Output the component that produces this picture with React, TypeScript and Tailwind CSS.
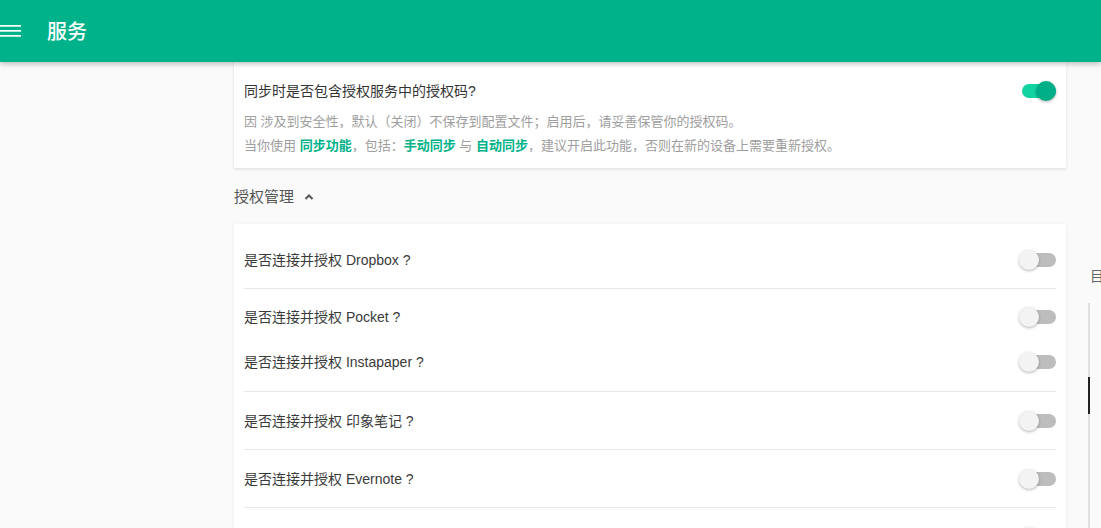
import React from "react";

const FONT = {
  fontFamily: '"Liberation Sans", "Noto Sans CJK SC", sans-serif',
};

const Switch = ({ on }: { on?: boolean }) => (
  <div
    className={`relative h-[14px] w-[34px] shrink-0 rounded-full ${
      on ? "bg-[#14d3a2]" : "bg-[#bdbdbd]"
    }`}
  >
    <div
      className={`absolute top-[-3px] h-[20px] w-[20px] rounded-full shadow-[0_1px_3px_rgba(0,0,0,0.3)] ${
        on ? "left-[14px] bg-[#00af88]" : "left-[-3px] bg-[#f3f3f3]"
      }`}
    />
  </div>
);

const services = [
  { name: "Dropbox", cls: "h-[58px] border-b border-[#e8e8e8]" },
  { name: "Pocket", cls: "pt-[19px]" },
  { name: "Instapaper", cls: "pt-[27px] pb-[20px] border-b border-[#e8e8e8]" },
  { name: "印象笔记", cls: "h-[58px] border-b border-[#e8e8e8]" },
  { name: "Evernote", cls: "h-[58px] border-b border-[#e8e8e8]" },
];

export default function App() {
  return (
    <div
      className="relative h-[528px] w-full overflow-hidden bg-[#fafafa]"
      style={FONT}
    >
      <header className="relative z-10 flex h-[62px] items-center bg-[#00b28a] shadow-[0_2px_5px_rgba(0,0,0,0.25)]">
        <svg width="22" height="14" viewBox="0 0 22 14">
          <rect x="0" y="1" width="21" height="1.7" fill="#fff" />
          <rect x="0" y="6" width="21" height="1.7" fill="#fff" />
          <rect x="0" y="11" width="21" height="1.7" fill="#fff" />
        </svg>
        <h1 className="ml-[25px] mt-[2px] text-[20px] font-medium leading-none text-white">
          服务
        </h1>
      </header>

      <div className="flex">
        <div className="w-[234px] shrink-0" />

        <main className="w-[832px] shrink-0">
          <section className="bg-white px-[10px] pt-[19px] pb-[10px] shadow-[0_1px_3px_rgba(0,0,0,0.12)]">
            <div className="flex items-center justify-between">
              <div className="text-[14px] leading-[20px] text-[#333]">
                同步时是否包含授权服务中的授权码?
              </div>
              <Switch on />
            </div>
            <div className="mt-[9px] text-[13px] leading-[24px] text-[#9e9e9e]">
              <p>因 涉及到安全性，默认（关闭）不保存到配置文件；启用后，请妥善保管你的授权码。</p>
              <p>
                当你使用 <b className="font-bold text-[#00b28a]">同步功能</b>，包括：
                <b className="font-bold text-[#00b28a]">手动同步</b> 与{" "}
                <b className="font-bold text-[#00b28a]">自动同步</b>
                ，建议开启此功能，否则在新的设备上需要重新授权。
              </p>
            </div>
          </section>

          <div className="mt-[19px] mb-[17px] flex items-center text-[15px] leading-[20px] text-[#555]">
            授权管理
            <svg width="10" height="8" viewBox="0 0 10 8" className="ml-[10px]">
              <path
                d="M1.5 6 L5 2.5 L8.5 6"
                fill="none"
                stroke="#555"
                strokeWidth="2"
              />
            </svg>
          </div>

          <section className="bg-white px-[10px] pt-[7px] shadow-[0_1px_3px_rgba(0,0,0,0.08)]">
            {services.map((s) => (
              <div
                key={s.name}
                className={`flex items-center justify-between ${s.cls}`}
              >
                <span className="text-[14px] leading-[18px] text-[#3a3a3a]">
                  是否连接并授权 {s.name} ?
                </span>
                <Switch />
              </div>
            ))}
            <div className="flex h-[58px] items-center justify-end">
              <Switch />
            </div>
          </section>
        </main>

        <aside className="ml-[22px] w-[120px] shrink-0 pt-[204px]">
          <div className="pl-[2px] text-[14px] leading-[20px] text-[#666]">
            目录
          </div>
          <div className="mt-[17px] flex h-[300px] w-[2px] flex-col bg-[#e0e0e0]">
            <div className="mt-[74px] h-[37px] w-[2px] bg-[#222]" />
          </div>
        </aside>
      </div>
    </div>
  );
}
